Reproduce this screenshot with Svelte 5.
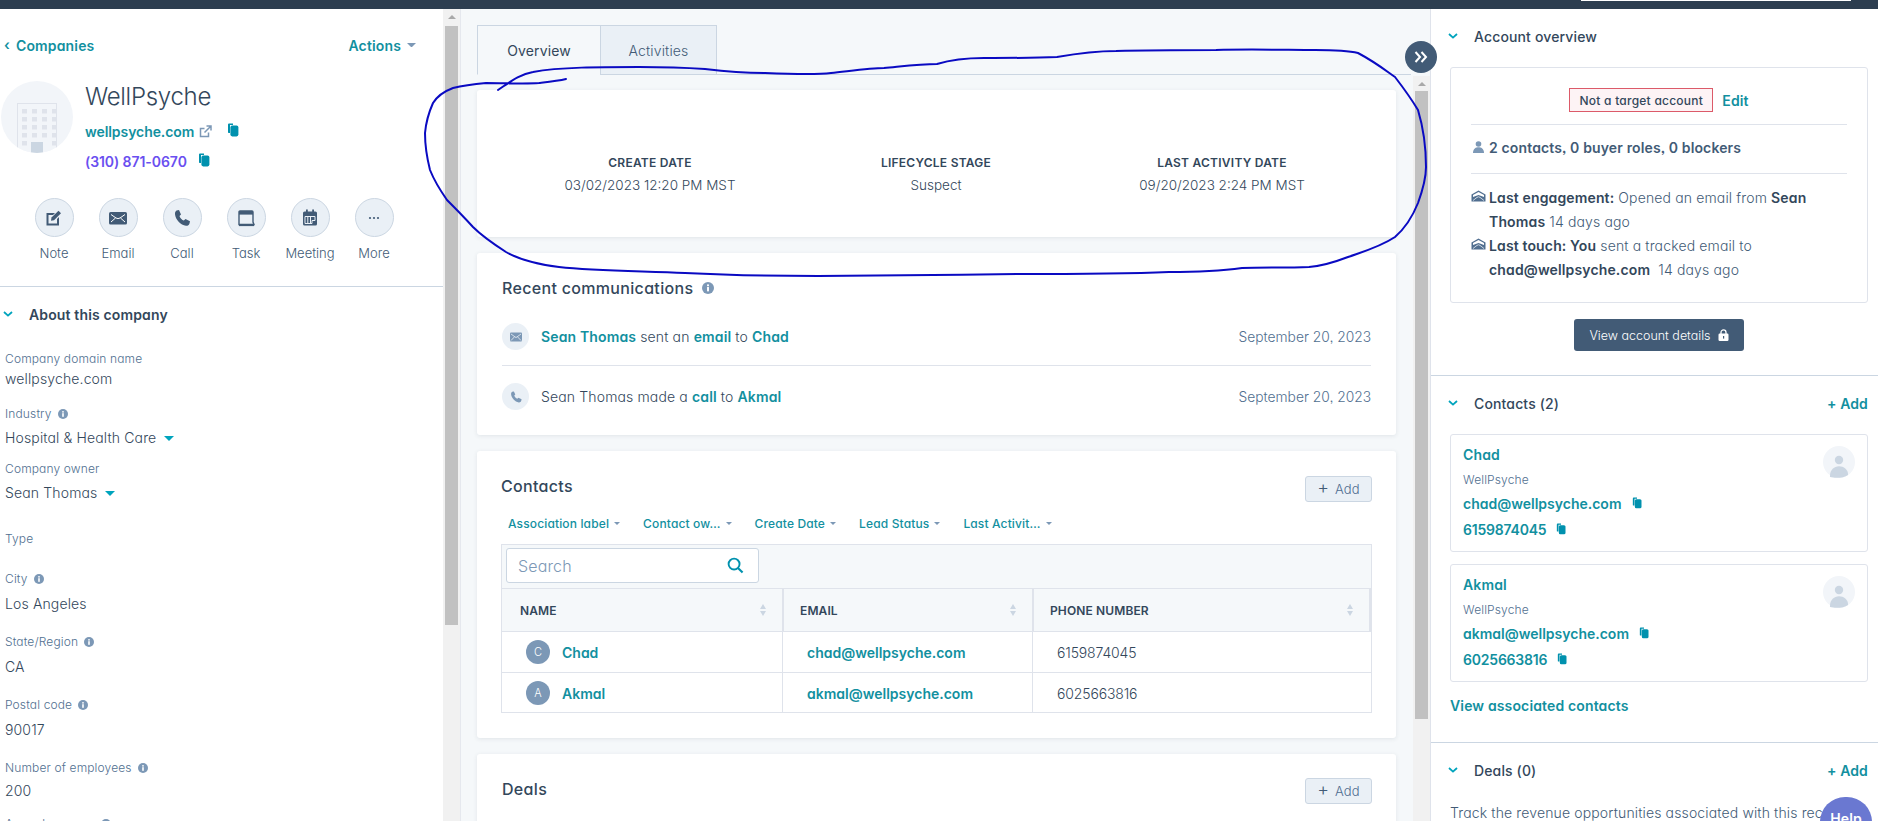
<script>
  const actions = ['Note', 'Email', 'Call', 'Task', 'Meeting', 'More'];
  const fields = [
    { label: 'Company domain name', value: 'wellpsyche.com', cls: 'first tight' },
    { label: 'Industry', info: true, value: 'Hospital & Health Care', caret: true, cls: 'mid' },
    { label: 'Company owner', value: 'Sean Thomas', caret: true, cls: 'owner' },
    { label: 'Type', value: '', cls: 'type' },
    { label: 'City', info: true, value: 'Los Angeles', cls: 'city' },
    { label: 'State/Region', info: true, value: 'CA', cls: '' },
    { label: 'Postal code', info: true, value: '90017', cls: '' },
    { label: 'Number of employees', info: true, value: '200', cls: 'emp' },
    { label: 'Annual revenue', info: true, value: '', cls: 'rev' }
  ];
  const filters = ['Association label', 'Contact ow…', 'Create Date', 'Lead Status', 'Last Activit…'];
  const stats = [
    ['CREATE DATE', '03/02/2023 12:20 PM MST'],
    ['LIFECYCLE STAGE', 'Suspect'],
    ['LAST ACTIVITY DATE', '09/20/2023 2:24 PM MST']
  ];
  const people = [
    { name: 'Chad', email: 'chad@wellpsyche.com', phone: '6159874045' },
    { name: 'Akmal', email: 'akmal@wellpsyche.com', phone: '6025663816' }
  ];
  const scribble = 'M498 90 C510 82 520 74 533 72 C560 67 600 67 639 67 C670 67 690 68 705 69 C730 72 745 73 765 73 C790 74 815 75 831 73 C850 71 870 68 884 68 C905 66 920 64 937 64 C950 60 970 58 984 58 C1010 58 1035 58 1057 57 C1080 53 1100 51 1116 51 C1150 50 1180 50 1216 50 C1250 49 1290 50 1315 50 C1335 50 1350 51 1358 53 C1375 62 1385 70 1395 77 C1405 90 1412 100 1418 110 C1424 130 1426 150 1426 167 C1426 180 1422 192 1418 203 C1412 218 1403 230 1395 237 C1380 247 1362 252 1348 257 C1335 262 1322 266 1309 267 C1285 268 1262 267 1242 268 C1220 271 1195 272 1169 272 C1120 274 1070 274 1017 274 C950 275 880 276 818 276 C770 276 725 275 685 273 C640 271 595 271 559 267 C535 264 520 260 506 252 C492 243 482 236 473 227 C463 216 455 208 447 200 C440 190 434 180 430 170 C427 158 425 145 425 133 C426 122 429 112 433 103 C438 95 445 91 453 88 C465 85 475 84 486 83 C505 83 525 84 539 83 C548 82 558 81 566 79';
</script>

{#snippet copy(color = '#0091ae')}
  <svg class="copy" viewBox="0 0 12 14" width="12" height="14">
    <path d="M1 1.5 A1 1 0 0 1 2 .5 H6 V2 H3 V10 H1.6 A.8 .8 0 0 1 1 9.3Z" fill={color} />
    <rect x="3.4" y="2.6" width="8" height="10.8" rx="1.8" fill={color} />
  </svg>
{/snippet}

{#snippet info()}
  <svg class="info" viewBox="0 0 10 10" width="10" height="10">
    <circle cx="5" cy="5" r="5" fill="#7c98b6" />
    <rect x="4.2" y="4.2" width="1.6" height="3.6" fill="#fff" />
    <circle cx="5" cy="2.8" r=".9" fill="#fff" />
  </svg>
{/snippet}

{#snippet chevron()}
  <svg class="chev" viewBox="0 0 10 6" width="10" height="6">
    <path d="M1 1 L5 4.6 L9 1" fill="none" stroke="#00a4bd" stroke-width="1.8" />
  </svg>
{/snippet}

{#snippet caret(color = '#00a4bd', w = 9)}
  <svg class="caret" viewBox="0 0 10 5" width={w} height={w / 2}>
    <path d="M0 0 H10 L5 5Z" fill={color} />
  </svg>
{/snippet}

{#snippet openMail()}
  <svg class="openmail" viewBox="0 0 15 12" width="15" height="12">
    <path d="M.5 4.5 L7.5 .5 L14.5 4.5 V11.5 H.5Z" fill="#516f90" />
    <path d="M2 5 L7.5 2 L13 5 V7 L7.5 5 L2 7Z" fill="#fff" />
    <path d="M2 10.5 L6 7.4 L7.5 6.8 L9 7.4 L13 10.5" fill="none" stroke="#cbd6e2" stroke-width="1" />
  </svg>
{/snippet}

{#snippet addButton()}
  <button class="add"><span class="plus">+</span> Add</button>
{/snippet}

{#snippet vbar(cls)}
  <div class="vbar {cls}">
    <div class="arrow"></div>
    <div class="thumb"></div>
  </div>
{/snippet}

<div class="page">
  <div class="topbar"><div class="topmark"></div></div>
  <div class="layout">
    <aside class="left">
      <div class="left-inner">
        <div class="nav">
          <span class="back">‹</span>
          <a class="link navlink">Companies</a>
          <span class="actions"><a class="link">Actions</a>{@render caret('#7c98b6', 9)}</span>
        </div>

        <div class="head">
          <svg class="logo" viewBox="0 0 72 72" width="72" height="72">
            <defs><clipPath id="lc"><circle cx="36" cy="36" r="36" /></clipPath></defs>
            <circle cx="36" cy="36" r="36" fill="#f2f5f9" />
            <g clip-path="url(#lc)">
              <rect x="16.5" y="22.5" width="39" height="52" fill="#f2f5f9" stroke="#dfe3eb" />
              {#each [0, 1, 2, 3, 4] as r}
                {#each [0, 1, 2, 3] as c}
                  {#if !(r === 4 && (c === 1 || c === 2))}
                    <rect x={21 + c * 10} y={28 + r * 8} width="5" height="4.5" fill="#dfe3eb" />
                  {/if}
                {/each}
              {/each}
              <rect x="30" y="61" width="12" height="12" fill="#cbd6e2" />
            </g>
          </svg>
          <div class="headtext">
            <h1>WellPsyche</h1>
            <div class="site">
              <a class="link">wellpsyche.com</a>
              <svg class="ext" viewBox="0 0 13 13" width="13" height="13">
                <path d="M9.5 7.5 V11.5 H1.5 V3.5 H5.5" fill="none" stroke="#7c98b6" stroke-width="1.5" />
                <path d="M5.5 7.5 L11.5 1.5 M7.5 1 H12 V5.5" fill="none" stroke="#7c98b6" stroke-width="1.5" />
              </svg>
              {@render copy()}
            </div>
            <div class="phone">
              <a class="purple">(310) 871-0670</a>
              {@render copy()}
            </div>
          </div>
        </div>

        <div class="acts">
          {#each actions as a}
            <div class="act">
              <div class="circle">
                <svg viewBox="0 0 20 20" width="20" height="20">
                  {#if a === 'Note'}
                    <path d="M2.5 5 H11 L9 7 H4.5 V15.5 H13 V11 L15 9 V17.5 H2.5Z" fill="#425b76" />
                    <path d="M7.5 9.5 L14.5 2.8 L17 5.2 L10 12.2 L7 12.7Z" fill="#425b76" />
                  {:else if a === 'Email'}
                    <rect x="1" y="4" width="18" height="12.5" rx="1.6" fill="#425b76" />
                    <path d="M3 6.5 L8 10 L10 10.6 L12 10 L17 6.5 M3 14 L7.5 10 M17 14 L12.5 10" fill="none" stroke="#fff" stroke-width="1" />
                  {:else if a === 'Call'}
                    <path d="M4.5 2.5 L7 2 L9 6.5 L7.5 8 C8 9.8 10 12 11.8 12.6 L13.5 11 L18 13.2 L17.5 15.5 C17 17.2 15.5 18 14 17.8 C8.5 17 3.5 11.5 3 6.2 C2.9 4.6 3.4 3.2 4.5 2.5Z" fill="#425b76" />
                  {:else if a === 'Task'}
                    <path d="M4 3 H16 A1 1 0 0 1 17 4 V14 L18 16.5 H3 V4 A1 1 0 0 1 4 3Z" fill="none" stroke="#425b76" stroke-width="1.4" />
                    <rect x="3" y="3" width="14" height="3.6" fill="#425b76" />
                    <path d="M3 17.5 H18" stroke="#425b76" stroke-width="1.2" />
                  {:else if a === 'Meeting'}
                    <rect x="3" y="3.5" width="14" height="14" rx="1.6" fill="#425b76" />
                    <rect x="6" y="1.5" width="1.8" height="3.5" fill="#425b76" />
                    <rect x="12.2" y="1.5" width="1.8" height="3.5" fill="#425b76" />
                    <path d="M5 8.5 H15 V12.5 H12 V15.5 H5Z M7.8 8.5 V15.5 M10.5 8.5 V15.5" fill="none" stroke="#eaf0f6" stroke-width="1" />
                  {:else}
                    <circle cx="6" cy="10" r="1.1" fill="#425b76" />
                    <circle cx="10" cy="10" r="1.1" fill="#425b76" />
                    <circle cx="14" cy="10" r="1.1" fill="#425b76" />
                  {/if}
                </svg>
              </div>
              <span class="actlabel">{a}</span>
            </div>
          {/each}
        </div>

        <div class="rule"></div>

        <div class="about">
          {@render chevron()}
          <span>About this company</span>
        </div>

        <div class="fields">
          {#each fields as f}
            <div class="field {f.cls}">
              <div class="lab">{f.label}{#if f.info}{@render info()}{/if}</div>
              {#if f.value}
                <div class="val">{f.value}{#if f.caret}{@render caret('#00a4bd', 10)}{/if}</div>
              {/if}
            </div>
          {/each}
        </div>
      </div>
      {@render vbar('vbar-left')}
    </aside>

    <main class="center">
      <div class="col">
        <div class="tabs">
          <div class="tab on">Overview</div>
          <div class="tab off">Activities</div>
        </div>

        <section class="card stats">
          {#each stats as s}
            <div class="stat">
              <div class="stat-h">{s[0]}</div>
              <div class="stat-v">{s[1]}</div>
            </div>
          {/each}
        </section>

        <section class="card comms">
          <h2>Recent communications{@render info()}</h2>
          <div class="comm first-comm">
            <span class="dot">
              <svg viewBox="0 0 14 14" width="14" height="14">
                <rect x="1" y="2.5" width="12" height="9" rx="1" fill="#7c98b6" />
                <path d="M2 4 L7 7.6 L12 4 M2 10.5 L5.5 6.8 M12 10.5 L8.5 6.8" fill="none" stroke="#eaf0f6" stroke-width=".8" />
              </svg>
            </span>
            <span class="commtext"><a class="link">Sean Thomas</a> sent an <a class="link">email</a> to <a class="link">Chad</a></span>
            <span class="date">September 20, 2023</span>
          </div>
          <div class="comm-rule"></div>
          <div class="comm">
            <span class="dot">
              <svg viewBox="0 0 20 20" width="14" height="14">
                <path d="M4.5 2.5 L7 2 L9 6.5 L7.5 8 C8 9.8 10 12 11.8 12.6 L13.5 11 L18 13.2 L17.5 15.5 C17 17.2 15.5 18 14 17.8 C8.5 17 3.5 11.5 3 6.2 C2.9 4.6 3.4 3.2 4.5 2.5Z" fill="#7c98b6" />
              </svg>
            </span>
            <span class="commtext">Sean Thomas made a <a class="link">call</a> to <a class="link">Akmal</a></span>
            <span class="date">September 20, 2023</span>
          </div>
        </section>

        <section class="card contacts">
          <div class="cardhead">
            <h2>Contacts</h2>
            {@render addButton()}
          </div>
          <div class="filters">
            {#each filters as f}
              <span class="filter"><a class="link">{f}</a>{@render caret('#7c98b6', 6)}</span>
            {/each}
          </div>
          <div class="table">
            <div class="searchrow">
              <div class="search">
                <span>Search</span>
                <svg viewBox="0 0 18 18" width="17" height="17">
                  <circle cx="7.5" cy="7.5" r="5.8" fill="none" stroke="#0091ae" stroke-width="2" />
                  <path d="M11.6 11.6 L16.5 16.5" stroke="#0091ae" stroke-width="2.2" />
                </svg>
              </div>
            </div>
            <div class="row thead">
              {#each ['NAME', 'EMAIL', 'PHONE NUMBER'] as h}
                <div class="th">
                  <span>{h}</span>
                  <span class="sort"><i class="up"></i><i class="down"></i></span>
                </div>
              {/each}
            </div>
            {#each people as p}
              <div class="row tr">
                <div class="td namecell">
                  <span class="ava">{p.name[0]}</span>
                  <a class="link">{p.name}</a>
                </div>
                <div class="td emailcell"><a class="link">{p.email}</a></div>
                <div class="td phonecell">{p.phone}</div>
              </div>
            {/each}
          </div>
        </section>

        <section class="card deals">
          <div class="cardhead">
            <h2>Deals</h2>
            {@render addButton()}
          </div>
        </section>
      </div>
      {@render vbar('vbar-main')}
    </main>

    <aside class="right">
      <section class="sec">
        <div class="sechead">
          {@render chevron()}
          <span>Account overview</span>
        </div>
        <div class="box overview">
          <div class="badgerow">
            <span class="badge">Not a target account</span>
            <a class="link edit">Edit</a>
          </div>
          <div class="box-rule r1"></div>
          <div class="counts">
            <svg viewBox="0 0 11 12" width="11" height="12">
              <circle cx="5.5" cy="3" r="2.8" fill="#7c98b6" />
              <path d="M0 12 C0 7.5 3 6.3 5.5 6.3 C8 6.3 11 7.5 11 12Z" fill="#7c98b6" />
            </svg>
            <b>2 contacts, 0 buyer roles, 0 blockers</b>
          </div>
          <div class="box-rule r2"></div>
          <div class="eng">
            <div class="engline">{@render openMail()}<span><b>Last engagement:</b> Opened an email from <b>Sean</b><br /><b>Thomas</b> 14 days ago</span></div>
            <div class="engline">{@render openMail()}<span><b>Last touch: You</b> sent a tracked email to<br /><b>chad@wellpsyche.com</b>&nbsp; 14 days ago</span></div>
          </div>
        </div>
        <div class="detailwrap">
          <button class="details">View account details
            <svg viewBox="0 0 11 12" width="11" height="12">
              <path d="M3 5 V3.4 A2.5 2.5 0 0 1 8 3.4 V5" fill="none" stroke="#fff" stroke-width="1.3" />
              <rect x="0.5" y="4.6" width="10" height="7.4" rx="1.2" fill="#fff" />
              <rect x="5" y="7" width="1.2" height="2.6" fill="#425b76" />
            </svg>
          </button>
        </div>
      </section>

      <section class="sec sec2">
        <div class="sechead">
          {@render chevron()}
          <span>Contacts (2)</span>
          <a class="link plusadd">+ Add</a>
        </div>
        <div class="plist">
          {#each people as p}
            <div class="box person">
              <div class="pname"><a class="link">{p.name}</a></div>
              <div class="pco">WellPsyche</div>
              <div class="pemail"><a class="link">{p.email}</a>{@render copy()}</div>
              <div class="pphone"><a class="link">{p.phone}</a>{@render copy()}</div>
              <svg class="pava" viewBox="0 0 32 32" width="32" height="32">
                <circle cx="16" cy="16" r="16" fill="#f2f5f9" />
                <circle cx="16" cy="14" r="4.2" fill="#cbd6e2" />
                <path d="M7 31 C6.5 24 11 20.2 16 20.2 C21 20.2 25.5 24 25 29 C21 32 12 32.5 7 31Z" fill="#cbd6e2" />
              </svg>
            </div>
          {/each}
        </div>
        <a class="link viewall">View associated contacts</a>
      </section>

      <section class="sec sec3">
        <div class="sechead">
          {@render chevron()}
          <span>Deals (0)</span>
          <a class="link plusadd">+ Add</a>
        </div>
        <p class="track">Track the revenue opportunities associated with this record by</p>
      </section>
    </aside>
  </div>

  <button class="expand" aria-label="Collapse">
    <svg viewBox="0 0 14 12" width="14" height="12">
      <path d="M1.5 1 L6 6 L1.5 11 M7.5 1 L12 6 L7.5 11" fill="none" stroke="#fff" stroke-width="2" />
    </svg>
  </button>

  <svg class="scribble" viewBox="0 0 1878 821" width="1878" height="821">
    <path d={scribble} fill="none" stroke="#0a0ac2" stroke-width="2" stroke-linecap="round" />
  </svg>

  <div class="help">Help</div>
</div>

<style>
  :global(body) { margin: 0; background: #fff; }
  .page {
    position: relative;
    width: 1878px;
    height: 821px;
    overflow: hidden;
    font-family: Inter, "Noto Sans", sans-serif;
    font-feature-settings: "cv11", "ss03";
    font-size: 14px;
    font-weight: 300;
    letter-spacing: 0.01em;
    color: #33475b;
  }
  a { text-decoration: none; }
  b { font-weight: 600; }
  .link { color: #12909f; font-weight: 600; }
  h1, h2, p { margin: 0; }
  .topbar { height: 9px; background: #2d3e50; position: relative; }
  .topmark { position: absolute; left: 1581px; top: 0; width: 270px; height: 1px; background: #fff; }
  .layout { display: flex; height: 812px; }

  /* scrollbars */
  .vbar { width: 17px; background: #f1f1f1; flex: none; display: flex; flex-direction: column; align-items: center; }
  .arrow {
    width: 0; height: 0; margin: 6px 0 5px;
    border-left: 4px solid transparent; border-right: 4px solid transparent; border-bottom: 4px solid #a8a8a8;
  }
  .thumb { width: 13px; background: #c1c1c1; }
  .vbar-left .arrow { margin-bottom: 7px; }
  .vbar-left .thumb { height: 599px; }
  .vbar-main { margin-top: 67px; }
  .vbar-main .thumb { height: 628px; }

  /* left column */
  .left { width: 460px; flex: none; display: flex; border-right: 1px solid #e5e8ee; }
  .left-inner { width: 443px; flex: none; }
  .nav { display: flex; align-items: center; height: 20px; margin-top: 26px; padding-right: 27px; }
  .back { width: 16px; padding-left: 4px; box-sizing: border-box; color: #12909f; font-weight: 600; line-height: 20px; }
  .actions { margin-left: auto; display: flex; align-items: center; gap: 6px; }
  .head { display: flex; margin: 26px 0 0 1px; }
  .logo { flex: none; }
  .headtext { margin-left: 12px; }
  h1 { font-size: 24px; line-height: 32px; font-weight: 300; color: #33475b; letter-spacing: -0.012em; }
  .site, .phone { display: flex; align-items: center; height: 20px; letter-spacing: -0.005em; }
  .site { margin-top: 8px; }
  .phone { margin-top: 10px; }
  .ext { margin-left: 5px; }
  .site .copy { margin-left: 15px; margin-top: -2px; }
  .phone .copy { margin-left: 11px; margin-top: -2px; }
  .purple { color: #6a4ff0; font-weight: 600; }
  .acts { display: flex; padding-left: 22px; margin-top: 27px; }
  .act { width: 64px; display: flex; flex-direction: column; align-items: center; }
  .circle {
    width: 39px; height: 39px; box-sizing: border-box; border-radius: 50%;
    background: #eaf0f6; border: 1px solid #cbd6e2;
    display: flex; align-items: center; justify-content: center;
  }
  .actlabel { font-size: 13px; line-height: 20px; margin-top: 6px; color: #425b76; white-space: nowrap; letter-spacing: 0; }
  .rule { height: 1px; background: #cbd6e2; margin-top: 23px; }
  .about { display: flex; align-items: center; height: 20px; margin-top: 17px; padding-left: 3px; font-weight: 600; color: #33475b; }
  .about .chev { margin-right: 16px; }

  .fields { display: flow-root; }
  .field { margin: 18px 0 0 5px; }
  .lab { height: 20px; line-height: 20px; font-size: 12px; color: #516f90; display: flex; align-items: center; gap: 6px; }
  .val { margin-top: 5px; height: 20px; line-height: 20px; font-size: 14px; color: #33475b; display: flex; align-items: center; gap: 8px; }
  .first { margin-top: 25px; }
  .tight .val { margin-top: 0; }
  .mid { margin-top: 15px; }
  .mid .val, .owner .val { margin-top: 4px; }
  .owner { margin-top: 11px; }
  .type { margin-top: 26px; }
  .city { margin-top: 20px; }
  .emp .val { margin-top: 3px; }
  .rev { margin-top: 13px; }

  /* centre column */
  .center { width: 969px; flex: none; background: #f5f8fa; display: flex; }
  .col { width: 952px; box-sizing: border-box; flex: none; padding: 16px 17px 0 16px; }
  .tabs { display: flex; height: 50px; box-sizing: border-box; border-bottom: 1px solid #cbd6e2; margin-right: -15px; }
  .tab {
    height: 50px; box-sizing: border-box; border: 1px solid #cbd6e2; border-bottom: 0;
    display: flex; align-items: center; justify-content: center; color: #33475b;
  }
  .tab.on { width: 123px; background: #f5f8fa; border-right: 0; border-bottom: 1px solid #f5f8fa; font-weight: 400; }
  .tab.off { width: 117px; background: #eaf0f6; border-bottom: 1px solid #cbd6e2; color: #425b76; }
  .card {
    background: #fff; border-radius: 3px; margin-top: 16px;
    box-shadow: 0 1px 4px rgba(45, 62, 80, 0.1);
  }
  .tabs + .card { margin-top: 15px; }
  .stats {
    height: 147px; box-sizing: border-box; padding: 0 31px 0 30px;
    display: grid; grid-template-columns: repeat(3, 1fr); align-items: center; text-align: center;
    padding-top: 21px;
  }
  .stat-h { font-size: 12px; line-height: 20px; font-weight: 600; color: #33475b; letter-spacing: 0.02em; }
  .stat-v { margin-top: 2px; line-height: 20px; color: #33475b; font-size: 13.5px; letter-spacing: 0; }
  .comms { height: 182px; padding: 0 25px; box-sizing: border-box; padding-top: 25px; }
  h2 { font-size: 16px; line-height: 20px; font-weight: 500; color: #33475b; display: flex; align-items: center; gap: 9px; letter-spacing: 0.02em; align-self: flex-start; }
  h2 .info { width: 12px; height: 12px; }
  .comm { display: flex; align-items: center; height: 27px; }
  .first-comm { margin-top: 25px; }
  .comm-rule { height: 1px; background: #dfe3eb; margin: 15px 0 17px; }
  .dot {
    width: 27px; height: 27px; border-radius: 50%; background: #eaf0f6; flex: none;
    display: flex; align-items: center; justify-content: center;
  }
  .commtext { margin-left: 12px; }
  .date { margin-left: auto; color: #516f90; font-size: 13.8px; letter-spacing: 0; }
  .contacts { height: 287px; box-sizing: border-box; padding: 25px 24px 0 24px; margin-left: 0; }
  .cardhead { display: flex; justify-content: space-between; }
  .add {
    width: 67px; height: 26px; box-sizing: border-box; margin-top: 0;
    background: #eaf0f6; border: 1px solid #cbd6e2; border-radius: 3px; padding: 0;
    font: inherit; font-size: 13px; color: #506e91; letter-spacing: 0.01em;
  }
  .plus { font-size: 18px; line-height: 12px; color: #425b76; margin-right: 2px; }
  .filters { display: flex; height: 20px; margin-top: 11px; padding-left: 7px; font-size: 12px; align-items: center; }
  .filter { display: flex; align-items: center; gap: 5px; margin-right: 23px; white-space: nowrap; }
  .filter .link { font-weight: 500; }
  .table { margin: 11px 0 0 0; border: 1px solid #dfe3eb; box-sizing: border-box; height: 169px; width: 871px; }
  .searchrow { height: 44px; background: #f5f8fa; padding: 3px 0 0 4px; box-sizing: border-box; border-bottom: 1px solid #dfe3eb; }
  .search {
    width: 253px; height: 35px; box-sizing: border-box; background: #fff;
    border: 1px solid #cbd6e2; border-radius: 3px;
    display: flex; align-items: center; justify-content: space-between; padding: 0 14px 0 11px;
    font-size: 16px; color: #7c98b6;
  }
  .row { display: grid; grid-template-columns: 280px 250px 1fr; }
  .thead { height: 43px; background: #f5f8fa; border-bottom: 1px solid #dfe3eb; box-sizing: border-box; }
  .th {
    display: flex; align-items: center; justify-content: space-between; padding: 0 16px;
    font-size: 12px; font-weight: 600; color: #33475b; letter-spacing: 0.01em;
    border-left: 2px solid #dfe3eb;
  }
  .th:first-child { border-left: 0; padding-left: 18px; }
  .th:last-child { border-right: 2px solid #dfe3eb; }
  .sort { display: flex; flex-direction: column; gap: 2px; }
  .sort i { display: block; width: 0; height: 0; border-left: 3px solid transparent; border-right: 3px solid transparent; }
  .sort .up { border-bottom: 5px solid #cbd6e2; }
  .sort .down { border-top: 5px solid #cbd6e2; }
  .tr { height: 40px; border-bottom: 1px solid #dfe3eb; box-sizing: content-box; }
  .tr:last-child { border-bottom: 0; }
  .td { display: flex; align-items: center; border-left: 1px solid #dfe3eb; letter-spacing: 0; }
  .td:first-child { border-left: 0; }
  .namecell { padding-left: 24px; gap: 12px; }
  .emailcell { padding-left: 24px; }
  .phonecell { padding-left: 24px; color: #33475b; letter-spacing: -0.01em; }
  .ava {
    width: 24px; height: 24px; border-radius: 50%; background: #7c98b6; color: #fff;
    font-size: 11px; display: flex; align-items: center; justify-content: center;
  }
  .deals { height: 120px; box-sizing: border-box; padding: 24px 24px 0 25px; }
  .deals h2 { margin-top: 1px; }

  /* right column */
  .right { width: 448px; flex: none; box-sizing: border-box; border-left: 1px solid #dfe3eb; overflow: hidden; background: #fff; }
  .sec { padding: 17px 10px 0 19px; }
  .sec2, .sec3 { border-top: 1px solid #cbd6e2; }
  .sechead { display: flex; align-items: center; height: 20px; margin-left: -2px; font-weight: 500; color: #33475b; }
  .sechead .chev { margin-right: 16px; }
  .plusadd { margin-left: auto; }
  .box { border: 1px solid #dfe3eb; border-radius: 3px; box-sizing: border-box; }
  .overview { margin-top: 21px; height: 236px; padding: 20px 20px 0; }
  .badgerow { display: flex; justify-content: center; align-items: center; gap: 9px; }
  .badge {
    height: 24px; width: 144px; box-sizing: border-box; display: flex; align-items: center; justify-content: center;
    border: 1px solid #dc5a69; background: #fdf3f5; font-size: 12px; font-weight: 500; white-space: nowrap; letter-spacing: 0.02em;
  }
  .box-rule { height: 1px; background: #dfe3eb; }
  .r1 { margin-top: 12px; }
  .r2 { margin-top: 16px; }
  .counts { display: flex; align-items: center; gap: 5px; height: 20px; margin-top: 12px; padding-left: 2px; color: #425b76; }
  .eng { margin-top: 12px; }
  .engline { display: flex; gap: 3px; line-height: 24px; color: #425b76; }
  .openmail { flex: none; margin-top: 4px; }
  .engline b { color: #33475b; }
  .detailwrap { display: flex; justify-content: center; margin-top: 16px; }
  .details {
    width: 170px; height: 32px; border: 0; border-radius: 3px; background: #425b76; color: #fff;
    font: inherit; font-size: 12.5px; font-weight: 300; letter-spacing: 0;
    display: flex; align-items: center; justify-content: center; gap: 7px; padding: 0;
  }
  .sec:first-child { padding-bottom: 24px; }
  .plist { margin-top: 21px; display: flex; flex-direction: column; gap: 12px; }
  .person { position: relative; height: 118px; padding: 10px 12px 0; }
  .pname { height: 20px; line-height: 20px; }
  .pco { height: 20px; line-height: 20px; margin-top: 5px; font-size: 12px; color: #516f90; }
  .pemail, .pphone { display: flex; align-items: center; gap: 10px; height: 20px; letter-spacing: 0; }
  .pemail { margin-top: 3px; }
  .pphone { margin-top: 6px; letter-spacing: -0.015em; }
  .pemail .copy, .pphone .copy { width: 10px; height: 12px; }
  .pava { position: absolute; right: 12px; top: 11px; }
  .viewall { display: block; height: 20px; line-height: 20px; margin-top: 14px; padding-bottom: 26px; }
  .track { margin-top: 21px; line-height: 24px; white-space: nowrap; overflow: hidden; color: #425b76; }

  /* floating */
  .expand {
    position: absolute; left: 1405px; top: 41px; width: 32px; height: 32px; border-radius: 50%;
    background: #425b76; border: 0; padding: 0; display: flex; align-items: center; justify-content: center;
  }
  .scribble { position: absolute; left: 0; top: 0; pointer-events: none; }
  .help {
    position: absolute; left: 1820px; top: 797px; width: 52px; height: 50px; border-radius: 26px;
    background: #6a78d1; color: #fff; font-weight: 600; font-size: 14px; text-align: center; line-height: 44px;
  }
</style>
